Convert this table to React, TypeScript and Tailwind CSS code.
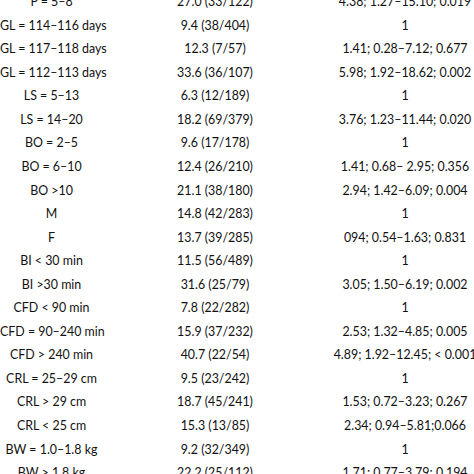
const rows: [string, string, string][] = [
  ["P = 5–8", "27.0 (33/122)", "4.38; 1.27–15.10; 0.019"],
  ["GL = 114–116 days", "9.4 (38/404)", "1"],
  ["GL = 117–118 days", "12.3 (7/57)", "1.41; 0.28–7.12; 0.677"],
  ["GL = 112–113 days", "33.6 (36/107)", "5.98; 1.92–18.62; 0.002"],
  ["LS = 5–13", "6.3 (12/189)", "1"],
  ["LS = 14–20", "18.2 (69/379)", "3.76; 1.23–11.44; 0.020"],
  ["BO = 2–5", "9.6 (17/178)", "1"],
  ["BO = 6–10", "12.4 (26/210)", "1.41; 0.68– 2.95; 0.356"],
  ["BO >10", "21.1 (38/180)", "2.94; 1.42–6.09; 0.004"],
  ["M", "14.8 (42/283)", "1"],
  ["F", "13.7 (39/285)", "094; 0.54–1.63; 0.831"],
  ["BI < 30 min", "11.5 (56/489)", "1"],
  ["BI >30 min", "31.6 (25/79)", "3.05; 1.50–6.19; 0.002"],
  ["CFD < 90 min", "7.8 (22/282)", "1"],
  ["CFD = 90–240 min", "15.9 (37/232)", "2.53; 1.32–4.85; 0.005"],
  ["CFD > 240 min", "40.7 (22/54)", "4.89; 1.92–12.45; < 0.001"],
  ["CRL = 25–29 cm", "9.5 (23/242)", "1"],
  ["CRL > 29 cm", "18.7 (45/241)", "1.53; 0.72–3.23; 0.267"],
  ["CRL < 25 cm", "15.3 (13/85)", "2.34; 0.94–5.81;0.066"],
  ["BW = 1.0–1.8 kg", "9.2 (32/349)", "1"],
  ["BW > 1.8 kg", "22.2 (25/112)", "1.71; 0.77–3.79; 0.194"],
];

export default function App() {
  return (
    <div className="w-[474px] h-[474px] overflow-hidden bg-white">
      <div
        className="mt-[-9.3px] text-[#111] text-[12.4px] whitespace-nowrap"
        style={{ fontFamily: "Lato, 'Open Sans', sans-serif" }}
      >
        {rows.map((r, i) => (
          <div key={i} className="grid grid-cols-[103px_224px_156px] h-[23.56px] items-center">
            <div className="text-center">{r[0]}</div>
            <div className="text-center">{r[1]}</div>
            <div className="text-center">{r[2]}</div>
          </div>
        ))}
      </div>
    </div>
  );
}
